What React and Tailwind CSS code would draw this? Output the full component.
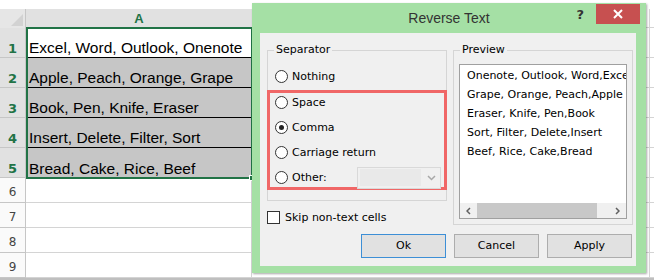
import React from 'react';

const rows = [
  'Excel, Word, Outlook, Onenote',
  'Apple, Peach, Orange, Grape',
  'Book, Pen, Knife, Eraser',
  'Insert, Delete, Filter, Sort',
  'Bread, Cake, Rice, Beef',
];

const preview = [
  'Onenote, Outlook, Word,Excel',
  'Grape, Orange, Peach,Apple',
  'Eraser, Knife, Pen,Book',
  'Sort, Filter, Delete,Insert',
  'Beef, Rice, Cake,Bread',
];

function Radio({ checked }) {
  return (
    <span className="w-[13px] h-[13px] rounded-full border border-[#333333] bg-white flex items-center justify-center shrink-0">
      {checked && <span className="w-[5px] h-[5px] rounded-full bg-[#222222]" />}
    </span>
  );
}

function RadioRow({ label, checked, children, pad }) {
  return (
    <div className={`flex items-center h-[19px] ${pad}`}>
      <Radio checked={checked} />
      <span className="ml-[4px] leading-[14px]">{label}</span>
      {children}
    </div>
  );
}

function Button({ label, primary }) {
  return (
    <div
      className={`w-[85px] h-[24px] flex items-center justify-center bg-[#e1e1e1] border ${
        primary ? 'border-[#3d8fd6]' : 'border-[#adadad]'
      }`}
    >
      {label}
    </div>
  );
}

export default function App() {
  return (
    <div className="relative w-[654px] h-[280px] overflow-hidden bg-white font-['Liberation_Sans',sans-serif]">
      {/* Spreadsheet */}
      <div className="h-[9px] bg-white" />
      <div className="flex h-[19px]">
        <div className="relative w-[26px] bg-[#e6e6e6] border-r border-[#c6c6c6] flex items-end justify-end pr-[2px] pb-[2px]">
          <svg width="12" height="12" viewBox="0 0 12 12">
            <polygon points="12,0 12,12 0,12" fill="#d2d2d2" />
          </svg>
        </div>
        <div className="w-[226px] bg-[#e1e1e1] flex items-center justify-center text-[#217346] font-bold text-[13px]">
          A
        </div>
        <div className="w-[398px] bg-white border-r border-b border-[#d4d4d4]" />
        <div className="flex-1 bg-white border-b border-[#d4d4d4]" />
      </div>

      {rows.map((t, i) => (
        <div key={t} className="flex h-[30px]">
          <div className="w-[26px] bg-[#e1e1e1] border-r border-b border-[#c6c6c6] flex items-end justify-center text-[#217346] font-bold text-[13px] leading-[16px] font-['DejaVu_Sans',sans-serif]">
            {i + 1}
          </div>
          <div
            className={`w-[226px] flex items-end pl-[3px] text-[15.5px] leading-[18px] text-black whitespace-nowrap ${
              i === 0 ? 'bg-white' : 'bg-[#c6c6c6]'
            } ${i < 4 ? 'border-b border-black' : ''}`}
          >
            {t}
          </div>
          <div className="w-[398px] border-r border-b border-[#d4d4d4]" />
          <div className="flex-1 border-b border-[#d4d4d4]" />
        </div>
      ))}

      {[6, 7, 8, 9].map((n) => (
        <div key={n} className="flex h-[25px]">
          <div className="w-[26px] bg-[#fafafa] border-r border-b border-[#c6c6c6] flex items-end justify-center pb-[2px] text-[#444444] text-[12px] leading-[15px] font-['DejaVu_Sans',sans-serif]">
            {n}
          </div>
          <div className="w-[226px] border-r border-b border-[#d4d4d4]" />
          <div className="w-[398px] border-r border-b border-[#d4d4d4]" />
          <div className="flex-1 border-b border-[#d4d4d4]" />
        </div>
      ))}
      <div className="h-[2px] bg-[#bfbfbf]" />

      {/* Selection border */}
      <div className="absolute left-[26px] top-[27px] w-[227px] h-[152px] border-2 border-[#217346]">
        <div className="absolute -right-[4px] -bottom-[4px] w-[6px] h-[6px] bg-[#217346] border border-white" />
      </div>

      {/* Dialog */}
      <div className="absolute left-[252px] top-[3px] w-[394px] h-[270px] bg-[#a5e0a5] flex flex-col font-['DejaVu_Sans',sans-serif] text-[11px] text-black shadow-[1px_1px_2px_rgba(0,0,0,0.35)]">
        <div className="grid grid-cols-[1fr_auto_1fr] h-[30px]">
          <div />
          <div className="self-center text-[14px] text-[#333333] font-['Liberation_Sans',sans-serif] leading-[18px]">
            Reverse Text
          </div>
          <div className="flex justify-end items-start">
            <span className="mt-[4px] mr-[12px] font-bold text-[13px] leading-[15px] text-[#333333]">?</span>
            <div className="mt-[1px] mr-[6px] w-[44px] h-[20px] bg-[#c75050] flex items-center justify-center">
              <svg width="10" height="10" viewBox="0 0 10 10">
                <path d="M1 1 L9 9 M9 1 L1 9" stroke="white" strokeWidth="2" />
              </svg>
            </div>
          </div>
        </div>

        <div className="ml-[8px] mr-[10px] h-[233px] bg-[#f0f0f0] pl-[7px] pr-[3px] pt-[17px] flex flex-col">
          <div className="flex gap-[6px] h-[175px]">
            {/* Left column */}
            <div className="w-[180px] flex flex-col">
              <div className="relative h-[151px] border border-[#d5d5d5] flex flex-col">
                <span className="absolute left-[6px] -top-[8px] px-[2px] bg-[#f0f0f0] leading-[14px]">Separator</span>
                <div className="pt-[16px]">
                  <RadioRow label="Nothing" pad="pl-[7px]" />
                </div>
                <div className="mt-[4px] -mx-[1px] border-[3px] border-[#f06767] flex flex-col gap-[6px]">
                  <RadioRow label="Space" pad="pl-[5px]" />
                  <RadioRow label="Comma" checked pad="pl-[5px]" />
                  <RadioRow label="Carriage return" pad="pl-[5px]" />
                  <RadioRow label="Other:" pad="pl-[5px]">
                    <div className="ml-auto mr-[3px] w-[84px] h-[22px] border border-[#d9d9d9] bg-[#f0f0f0] flex items-center pl-[2px] pr-[4px]">
                      <div className="w-[61px] h-[17px] bg-[#e9e9e9]" />
                      <svg className="ml-auto" width="9" height="6" viewBox="0 0 9 6">
                        <path d="M1 1 L4.5 4.5 L8 1" stroke="#a8a8a8" strokeWidth="1.5" fill="none" />
                      </svg>
                    </div>
                  </RadioRow>
                </div>
              </div>
              <div className="mt-[10px] flex items-center h-[13px]">
                <span className="w-[13px] h-[13px] border border-[#333333] bg-white shrink-0" />
                <span className="ml-[5px] leading-[14px]">Skip non-text cells</span>
              </div>
            </div>

            {/* Preview */}
            <div className="relative w-[180px] h-[175px] border border-[#d5d5d5]">
              <span className="absolute left-[6px] -top-[8px] px-[2px] bg-[#f0f0f0] leading-[14px]">Preview</span>
              <div className="mt-[13px] mx-[5px] h-[155px] border border-[#a0a0a0] bg-white flex flex-col">
                <div className="flex-1 pt-[1px] pl-[7px] leading-[19px] overflow-hidden whitespace-nowrap">
                  {preview.map((p) => (
                    <div key={p}>{p}</div>
                  ))}
                </div>
                <div className="h-[15px] bg-[#f0f0f0] flex items-stretch">
                  <div className="w-[17px] flex items-center justify-center">
                    <svg width="5" height="8" viewBox="0 0 5 8">
                      <path d="M4 1 L1 4 L4 7" stroke="#606060" strokeWidth="1.5" fill="none" />
                    </svg>
                  </div>
                  <div className="w-[120px] bg-[#c8c8c8]" />
                  <div className="flex-1" />
                  <div className="w-[17px] flex items-center justify-center">
                    <svg width="5" height="8" viewBox="0 0 5 8">
                      <path d="M1 1 L4 4 L1 7" stroke="#606060" strokeWidth="1.5" fill="none" />
                    </svg>
                  </div>
                </div>
              </div>
            </div>
          </div>

          <div className="mt-[9px] mr-[1px] flex justify-end gap-[8px]">
            <Button label="Ok" primary />
            <Button label="Cancel" />
            <Button label="Apply" />
          </div>
        </div>
      </div>
    </div>
  );
}
